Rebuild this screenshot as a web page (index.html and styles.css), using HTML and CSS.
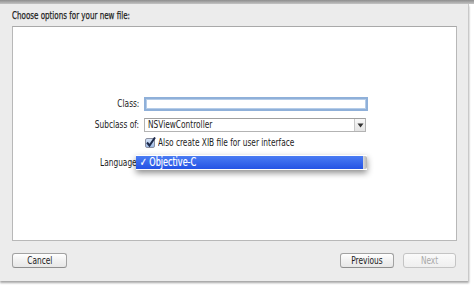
FILE: index.html
```html
<!DOCTYPE html>
<html>
<head>
<meta charset="utf-8">
<link rel="stylesheet" href="styles.css">
</head>
<body>
<div class="topbar"></div>
<div class="sheet">
  <div class="title"><span class="t">Choose options for your new file:</span></div>
  <div class="panel">
    <div class="form">
      <div class="label"><span class="t">Class:</span></div>
      <div class="control"><div class="textfield"></div></div>

      <div class="label"><span class="t">Subclass of:</span></div>
      <div class="control">
        <div class="combo">
          <span class="combo-text"><span class="t">NSViewController</span></span>
          <span class="combo-btn"><svg width="7" height="5" viewBox="0 0 7 5"><path d="M0.5 0.5h6l-3 4z" fill="#333"/></svg></span>
        </div>
      </div>

      <div class="label"></div>
      <div class="control check-row">
        <span class="checkbox"><svg width="11" height="11" viewBox="0 0 11 11"><path d="M2 5.5l2.5 3L10 0.5" fill="none" stroke="#1d2a4a" stroke-width="2"/></svg></span>
        <span class="check-label"><span class="t">Also create XIB file for user interface</span></span>
      </div>

      <div class="label"><span class="t">Language:</span></div>
      <div class="control lang">
        <div class="combo"></div>
        <div class="menu">
          <div class="menu-item"><span class="t">✓ Objective-C</span></div>
          <div class="menu-edge"></div>
        </div>
      </div>
    </div>
  </div>
  <div class="footer">
    <button class="btn cancel"><span class="t">Cancel</span></button>
    <div class="spacer"></div>
    <button class="btn prev"><span class="t">Previous</span></button>
    <button class="btn next" disabled><span class="t">Next</span></button>
  </div>
</div>
</body>
</html>
```
FILE: styles.css
```css
* { box-sizing: border-box; }
html, body { margin: 0; padding: 0; }
body {
  width: 474px;
  height: 298px;
  background: #ffffff;
  font-family: "DejaVu Sans Condensed", "DejaVu Sans", sans-serif;
  font-size: 11px;
  color: #1c1c1c;
  overflow: hidden;
  position: relative;
}
.t {
  display: inline-block;
  white-space: nowrap;
  transform: scaleX(0.75);
  transform-origin: left center;
}
.topbar {
  height: 4px;
  background: linear-gradient(#8e8e8e, #c4c4c4);
}
.sheet {
  width: 469px;
  height: 277px;
  background: #ececec;
  border-right: 1px solid #c9c9c9;
  box-shadow: 0 2px 2px rgba(0,0,0,0.35);
  padding: 6px 0 0 12px;
  display: flex;
  flex-direction: column;
}
.title {
  height: 16px;
  line-height: 12px;
  font-size: 11.2px;
  color: #1e1e1e;
  -webkit-text-stroke: 0.25px #1e1e1e;
}
.title .t { transform: scaleX(0.71); }
.panel {
  width: 445px;
  height: 215px;
  background: #ffffff;
  border: 1px solid #b8b8b8;
  border-top-color: #a9a9a9;
  padding-top: 70px;
}
.form {
  display: grid;
  grid-template-columns: 126px 224px;
  column-gap: 5px;
  align-items: center;
}
.label {
  text-align: right;
  height: 14px;
  line-height: 14px;
}
.label .t { transform-origin: right center; }
.control { position: relative; }
.textfield {
  height: 14px;
  border: 2px solid #8fb0d9;
  box-shadow: inset 0 0 0 1px #b5cce8;
  background: #fff;
  margin-bottom: 7px;
}
.form > .label:nth-child(1) { margin-bottom: 7px; }
.form > .label:nth-child(3) { margin-bottom: 5px; }
.form > .label:nth-child(5) { height: 12px; margin-bottom: 7px; }
.combo {
  width: 222px;
  height: 14px;
  border: 1px solid #b3b3b3;
  border-top-color: #a0a0a0;
  background: #fff;
  display: flex;
  align-items: center;
  margin-bottom: 5px;
}
.combo-text {
  flex: 1;
  padding-left: 3px;
  line-height: 12px;
}
.combo-btn {
  width: 11px;
  height: 12px;
  border-left: 1px solid #c8c8c8;
  background: linear-gradient(#f8f8f8, #e4e4e4);
  display: flex;
  align-items: center;
  justify-content: center;
}
.check-row {
  display: flex;
  align-items: center;
  height: 12px;
  margin-bottom: 7px;
}
.checkbox {
  width: 10px;
  height: 10px;
  border: 1px solid #8a8fa0;
  border-radius: 2px;
  background: linear-gradient(#d6e3f7, #9fbbe6);
  margin-left: 1px;
  position: relative;
  flex: none;
}
.checkbox svg { position: absolute; left: -1px; top: -2px; }
.check-label {
  margin-left: 3px;
  line-height: 12px;
}
.lang .combo { margin-bottom: 0; }
.menu {
  position: absolute;
  left: -8px;
  top: -1px;
  width: 231px;
  height: 15px;
  background: #fff;
  box-shadow: 0 3px 6px rgba(0,0,0,0.45);
  display: flex;
  padding: 1px 0;
}
.menu-item {
  flex: 1;
  background: linear-gradient(#4a7cf3, #2553e4);
  color: #fff;
  font-size: 11.5px;
  line-height: 13px;
  padding-left: 4px;
}
.menu-item .t { transform: scaleX(0.78); -webkit-text-stroke: 0.2px #fff; }
.menu-edge {
  width: 4px;
  background: linear-gradient(90deg, #d9d9d9, #b5b5b5);
  border-radius: 0 2px 2px 0;
}
.footer {
  display: flex;
  margin-top: 12px;
  width: 444px;
}
.spacer { flex: 1; }
.btn {
  height: 15px;
  padding: 0;
  border: 1px solid #a2a2a2;
  border-bottom-color: #8e8e8e;
  border-radius: 3px;
  background: linear-gradient(#ffffff, #f1f1f1 50%, #e7e7e7);
  font-family: inherit;
  font-size: 11px;
  line-height: 13px;
  color: #1a1a1a;
  text-align: center;
  overflow: visible;
}
.btn .t { transform-origin: center center; }
.cancel { width: 55px; }
.prev { width: 54px; }
.next { width: 53px; margin-left: 9px; color: #a8a8a8; border-color: #c4c4c4; background: linear-gradient(#fafafa, #efefef); }
```
